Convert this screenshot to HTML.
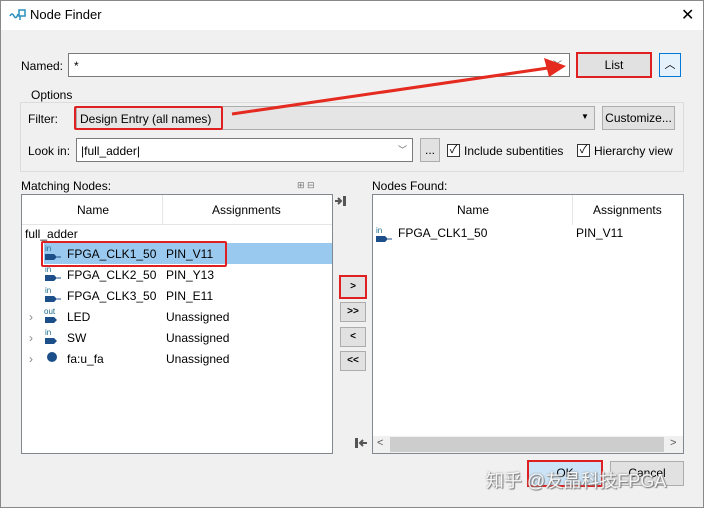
<!DOCTYPE html><html><head><style>
body{margin:0;width:704px;height:508px;overflow:hidden;background:#f0f0f0;font-family:"Liberation Sans","Noto Sans CJK SC",sans-serif;font-size:12px;color:#000;position:relative}
div,span{position:absolute;box-sizing:border-box}
.t{white-space:nowrap}
.inp{background:#fff;border:1px solid #7a7a7a}
.btn{background:#e1e1e1;border:1px solid #adadad;text-align:center}
.red{border:2px solid #e02020;border-radius:2px}
.cb{width:13px;height:13px;border:1px solid #333;background:#fff;font-size:11px;line-height:11px;text-align:center}
.row{height:21px;line-height:21px;font-size:12px}
</style></head><body>
<div style="left:0;top:0;width:704px;height:30px;background:#fff"></div>
<div style="left:0;top:0;width:704px;height:508px;border:1px solid #888"></div>
<svg style="position:absolute;left:9px;top:8px" width="18" height="14"><path d="M1 8 Q3 4 5 8 Q7 12 9 6" stroke="#2a8fbd" fill="none" stroke-width="1.5"/><rect x="10" y="2" width="6" height="6" fill="none" stroke="#2a8fbd" stroke-width="1.5"/><path d="M11 8 L11 12" stroke="#2a8fbd" stroke-width="1.5"/></svg>
<div class="t" style="left:30px;top:7px;font-size:13px">Node Finder</div>
<div class="t" style="left:681px;top:5px;font-size:16px">✕</div>

<div class="t" style="left:21px;top:59px">Named:</div>
<div class="inp" style="left:68px;top:53px;width:502px;height:24px"></div>
<div class="t" style="left:74px;top:59px">*</div>
<div class="t" style="left:553px;top:58px;color:#666;font-size:9px">﹀</div>
<div class="btn" style="left:576px;top:52px;width:76px;height:26px;line-height:22px;border:2px solid #e02020;background:#e1e1e1">List</div>
<div style="left:659px;top:53px;width:22px;height:24px;border:1px solid #0078d7;background:#e5f1fb;text-align:center;font-size:11px;line-height:22px">︿</div>

<div style="left:20px;top:102px;width:664px;height:70px;border:1px solid #dcdcdc"></div>
<div class="t" style="left:29px;top:88px;background:#f0f0f0;padding:0 2px">Options</div>
<div class="t" style="left:28px;top:112px">Filter:</div>
<div style="left:76px;top:106px;width:519px;height:24px;background:#e5e5e5;border:1px solid #adadad"></div>
<div class="red" style="left:74px;top:106px;width:149px;height:24px"></div>
<div class="t" style="left:80px;top:112px">Design Entry (all names)</div>
<div class="t" style="left:581px;top:112px;font-size:8px">▼</div>
<div class="btn" style="left:602px;top:106px;width:73px;height:24px;line-height:22px">Customize...</div>
<div class="t" style="left:28px;top:144px">Look in:</div>
<div class="inp" style="left:76px;top:138px;width:337px;height:24px"></div>
<div class="t" style="left:81px;top:144px">|full_adder|</div>
<div class="t" style="left:398px;top:143px;color:#666;font-size:9px">﹀</div>
<div class="btn" style="left:420px;top:138px;width:20px;height:24px;line-height:22px">...</div>
<div class="cb" style="left:447px;top:144px">✓</div>
<div class="t" style="left:464px;top:144px">Include subentities</div>
<div class="cb" style="left:577px;top:144px">✓</div>
<div class="t" style="left:594px;top:144px">Hierarchy view</div>

<div class="t" style="left:21px;top:179px">Matching Nodes:</div>
<div class="t" style="left:297px;top:180px;font-size:9px;color:#777">⊞ ⊟</div>
<div class="inp" style="left:21px;top:194px;width:312px;height:260px;border-color:#828790"></div>
<div style="left:22px;top:195px;width:310px;height:30px;background:#fff;border-bottom:1px solid #e5e5e5"></div>
<div style="left:162px;top:195px;width:1px;height:30px;background:#e5e5e5"></div>
<div class="t" style="left:77px;top:203px">Name</div>
<div class="t" style="left:212px;top:203px">Assignments</div>
<div class="t" style="left:25px;top:227px">full_adder</div>
<div style="left:44px;top:243px;width:288px;height:21px;background:#99c9ef"></div>
<div class="red" style="left:41px;top:241px;width:186px;height:26px"></div>
<div class="row t" style="left:67px;top:244px">FPGA_CLK1_50</div><div class="row t" style="left:166px;top:244px">PIN_V11</div>
<div class="row t" style="left:67px;top:265px">FPGA_CLK2_50</div><div class="row t" style="left:166px;top:265px">PIN_Y13</div>
<div class="row t" style="left:67px;top:286px">FPGA_CLK3_50</div><div class="row t" style="left:166px;top:286px">PIN_E11</div>
<div class="row t" style="left:67px;top:307px">LED</div><div class="row t" style="left:166px;top:307px">Unassigned</div>
<div class="row t" style="left:67px;top:328px">SW</div><div class="row t" style="left:166px;top:328px">Unassigned</div>
<div class="row t" style="left:67px;top:349px">fa:u_fa</div><div class="row t" style="left:166px;top:349px">Unassigned</div>
<div class="t" style="left:29px;top:310px;color:#888">›</div>
<div class="t" style="left:29px;top:331px;color:#888">›</div>
<div class="t" style="left:29px;top:352px;color:#888">›</div>
<svg style="position:absolute;left:44px;top:243px" width="20" height="125">
<g font-size="8" fill="#1a6a8a" font-family="Liberation Sans">
<text x="1" y="8">in</text><text x="1" y="29">in</text><text x="1" y="50">in</text><text x="0" y="71">out</text><text x="1" y="92">in</text></g>
<g fill="#1c4f8a"><path d="M1 11h9l3 3-3 3H1z"/><path d="M1 32h9l3 3-3 3H1z"/><path d="M1 53h9l3 3-3 3H1z"/><path d="M1 74h9l3 3-3 3H1z"/><path d="M1 95h9l3 3-3 3H1z"/><circle cx="8" cy="114" r="5"/></g>
<g stroke="#1c4f8a"><path d="M13 14h4M13 35h4M13 56h4"/></g></svg>

<svg style="position:absolute;left:334px;top:195px" width="14" height="12"><rect x="9" y="1" width="3" height="10" fill="#555"/><path d="M1 6h5M4 3l3 3-3 3" stroke="#555" fill="none" stroke-width="2"/></svg>
<div class="btn" style="left:339px;top:275px;width:28px;height:24px;border:2px solid #e02020;line-height:20px;font-weight:bold;font-size:10px">&gt;</div>
<div class="btn" style="left:340px;top:302px;width:26px;height:20px;line-height:18px;font-weight:bold;font-size:10px">&gt;&gt;</div>
<div class="btn" style="left:340px;top:327px;width:26px;height:20px;line-height:18px;font-weight:bold;font-size:10px">&lt;</div>
<div class="btn" style="left:340px;top:351px;width:26px;height:20px;line-height:18px;font-weight:bold;font-size:10px">&lt;&lt;</div>
<svg style="position:absolute;left:354px;top:437px" width="14" height="12"><rect x="1" y="1" width="3" height="10" fill="#555"/><path d="M13 6h-6M9 3l-3 3 3 3" stroke="#555" fill="none" stroke-width="2"/></svg>

<div class="t" style="left:372px;top:179px">Nodes Found:</div>
<div class="inp" style="left:372px;top:194px;width:312px;height:260px;border-color:#828790"></div>
<div style="left:572px;top:195px;width:1px;height:30px;background:#e5e5e5"></div>
<div class="t" style="left:457px;top:203px">Name</div>
<div class="t" style="left:593px;top:203px">Assignments</div>
<svg style="position:absolute;left:375px;top:225px" width="20" height="20"><text x="1" y="8" font-size="8" fill="#1a6a8a" font-family="Liberation Sans">in</text><path d="M1 11h9l3 3-3 3H1z" fill="#1c4f8a"/><path d="M13 14h4" stroke="#1c4f8a"/></svg>
<div class="row t" style="left:398px;top:223px">FPGA_CLK1_50</div>
<div class="row t" style="left:576px;top:223px">PIN_V11</div>
<div style="left:373px;top:436px;width:310px;height:17px;background:#f0f0f0"></div>
<div style="left:390px;top:437px;width:274px;height:15px;background:#cdcdcd"></div>
<div class="t" style="left:377px;top:437px;font-size:11px;color:#555">&lt;</div>
<div class="t" style="left:670px;top:437px;font-size:11px;color:#555">&gt;</div>

<div class="btn" style="left:527px;top:460px;width:76px;height:27px;border:2px solid #e02020;background:#cce4f7;line-height:23px">OK</div>
<div class="btn" style="left:610px;top:461px;width:74px;height:25px;line-height:23px">Cancel</div>
<div class="t" style="left:486px;top:467px;font-size:18px;color:rgba(255,255,255,0.9);text-shadow:0 0 2px #888,1px 1px 1px #777">知乎 @友晶科技FPGA</div>

<svg style="position:absolute;left:0;top:0" width="704" height="508"><path d="M232 114 L548 68" stroke="#e52a20" stroke-width="3"/><path d="M566 66 L544 58 L549 77z" fill="#e52a20"/></svg>
</body></html>
